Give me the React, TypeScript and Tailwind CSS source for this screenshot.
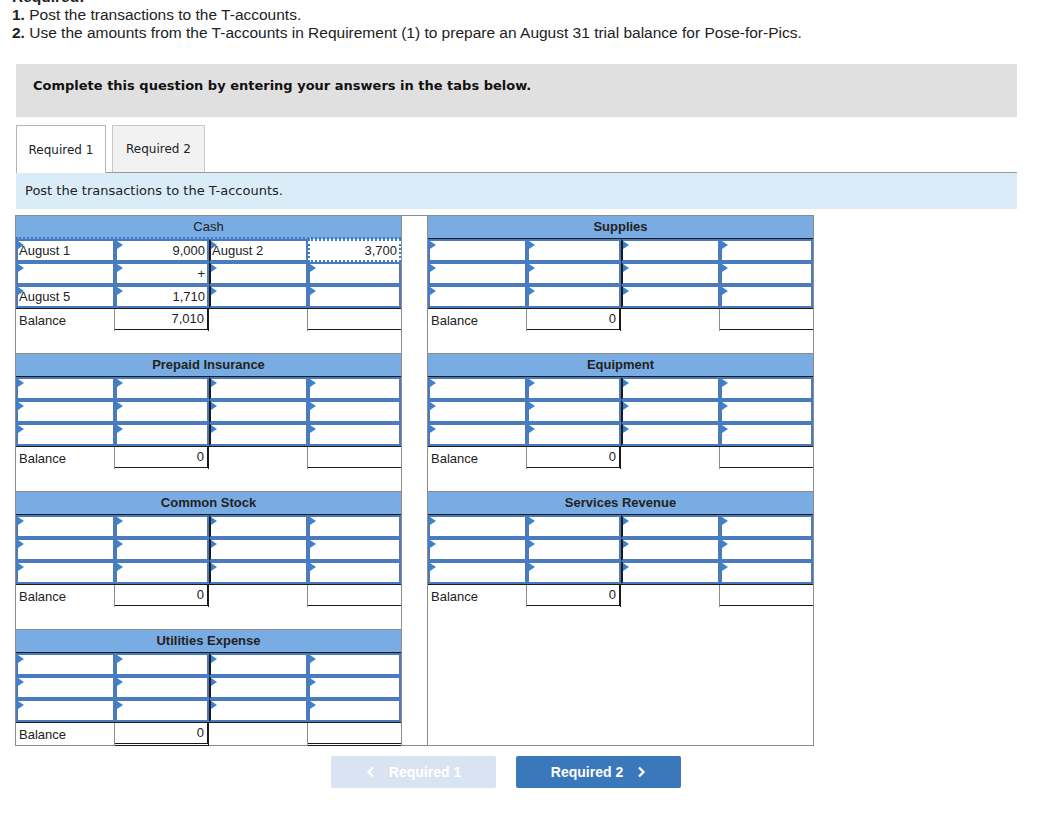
import React from "react";

type Row = { cells: string[]; dotted4?: boolean };
type Acct = { name: string; rows: Row[]; balance: string; bold?: boolean; dottedHeader?: boolean };

const emptyRows: Row[] = [{ cells: ["", "", "", ""] }, { cells: ["", "", "", ""] }, { cells: ["", "", "", ""] }];

const left: Acct[] = [
  {
    name: "Cash",
    bold: false,
    dottedHeader: true,
    rows: [
      { cells: ["August 1", "9,000", "August 2", "3,700"], dotted4: true },
      { cells: ["", "+", "", ""] },
      { cells: ["August 5", "1,710", "", ""] },
    ],
    balance: "7,010",
  },
  { name: "Prepaid Insurance", bold: true, rows: emptyRows, balance: "0" },
  { name: "Common Stock", bold: true, rows: emptyRows, balance: "0" },
  { name: "Utilities Expense", bold: true, rows: emptyRows, balance: "0" },
];

const right: Acct[] = [
  { name: "Supplies", bold: true, rows: emptyRows, balance: "0" },
  { name: "Equipment", bold: true, rows: emptyRows, balance: "0" },
  { name: "Services Revenue", bold: true, rows: emptyRows, balance: "0" },
];

const cellFont = { fontFamily: '"Liberation Sans", Arial, sans-serif' };

function Tri() {
  return (
    <span className="absolute left-0 top-0 w-0 h-0 border-y-[4px] border-y-transparent border-l-[6px] border-l-[#3b82d0]" />
  );
}

function InputCell({ text, align, tLine, dotted }: { text: string; align: "left" | "right"; tLine?: boolean; dotted?: boolean }) {
  if (dotted) {
    return (
      <div className="relative h-[23px] border-2 border-dotted border-[#3b7dc6] flex items-center justify-end pr-[2px] text-[13px] text-[#222]">
        {text}
      </div>
    );
  }
  return (
    <div
      className={
        "relative h-[23px] border-2 border-[#4a7bbf] flex items-center text-[13px] text-[#222] " +
        (align === "right" ? "justify-end pr-[2px] " : "pl-[1px] ") +
        (tLine ? "border-l-[#1a1a1a]" : "")
      }
    >
      <Tri />
      {text}
    </div>
  );
}

function Block({ a, spacer }: { a: Acct; spacer: boolean }) {
  return (
    <div className="flex flex-col" style={cellFont}>
      <div
        className={
          "h-[23px] bg-[#7aace4] flex items-center justify-center text-[13px] text-[#222] " +
          (a.bold ? "font-bold " : "font-normal ") +
          (a.dottedHeader ? "border-b-2 border-dotted border-[#3b7dc6]" : "border-b border-[#1a1a1a]")
        }
      >
        {a.name}
      </div>
      {a.rows.map((r, i) => (
        <div key={i} className="grid grid-cols-[99px_94px_99px_93px]">
          <InputCell text={r.cells[0]} align="left" />
          <InputCell text={r.cells[1]} align="right" />
          <InputCell text={r.cells[2]} align="left" tLine />
          <InputCell text={r.cells[3]} align="right" dotted={r.dotted4} />
        </div>
      ))}
      <div className="grid grid-cols-[99px_94px_99px_93px] h-[23px] border-t border-[#1a1a1a] text-[13px] text-[#222]">
        <div className="flex items-center pl-[3px] border-r border-[#8c8c8c]">Balance</div>
        <div className="flex items-center justify-end pr-[3px] border-r-2 border-b-[3px] border-double border-[#1a1a1a]">
          {a.balance}
        </div>
        <div className="border-r border-[#8c8c8c]"></div>
        <div className="border-b-[3px] border-double border-[#1a1a1a]"></div>
      </div>
      {spacer && <div className="h-[23px] border-b border-[#8c8c8c] bg-white"></div>}
    </div>
  );
}

export default function App() {
  return (
    <div className="w-[1044px] min-h-[834px] bg-white overflow-hidden">
      <div
        className="-mt-[12px] pl-[12px] text-[15.5px] leading-[18px] text-[#222]"
        style={{ fontFamily: '"Liberation Sans", Arial, sans-serif' }}
      >
        <div className="font-bold">Required:</div>
        <div>
          <span className="font-bold">1.</span> Post the transactions to the T-accounts.
        </div>
        <div>
          <span className="font-bold">2.</span> Use the amounts from the T-accounts in Requirement (1) to prepare an August 31 trial balance for Pose-for-Pics.
        </div>
      </div>

      <div className="ml-[16px] w-[1001px]" style={{ fontFamily: '"DejaVu Sans", Verdana, sans-serif' }}>
        <div className="mt-[22px] h-[53px] bg-[#e0e0e0] pt-[14px] pl-[17px] text-[13px] leading-[16px] font-bold text-[#111]">
          Complete this question by entering your answers in the tabs below.
        </div>
        <div className="mt-[8px] flex items-end gap-[6px] border-b border-[#999]">
          <div className="h-[48px] w-[90px] -mb-px bg-white border border-b-0 border-[#b5b5b5] flex items-center justify-center text-[12px] text-[#222]">
            Required 1
          </div>
          <div className="h-[47px] w-[93px] bg-[#f2f2f2] border border-b-0 border-[#c8c8c8] flex items-center justify-center text-[12px] text-[#222]">
            Required 2
          </div>
        </div>
        <div className="h-[36px] bg-[#dbecf9] flex items-center pl-[9px] text-[13px] text-[#222]">
          Post the transactions to the T-accounts.
        </div>
      </div>

      <div className="ml-[15px] mt-[6px] w-[799px] border border-[#8c8c8c] flex">
        <div className="w-[385px] flex flex-col">
          {left.map((a, i) => (
            <Block key={a.name} a={a} spacer={i < left.length - 1} />
          ))}
        </div>
        <div className="w-[27px] border-x border-[#8c8c8c] bg-white"></div>
        <div className="w-[385px] flex flex-col">
          {right.map((a, i) => (
            <Block key={a.name} a={a} spacer={i < right.length - 1} />
          ))}
          <div className="flex-1 bg-white"></div>
        </div>
      </div>

      <div className="mt-[10px] pl-[331px] flex gap-[20px]" style={{ fontFamily: '"Liberation Sans", Arial, sans-serif' }}>
        <div className="w-[165px] h-[32px] rounded-[2px] bg-[#d8e4f2] flex items-center justify-center gap-[14px] text-white text-[14px] font-bold">
          <svg width="9" height="12" viewBox="0 0 9 12" fill="none">
            <path d="M7 1.5 L2.5 6 L7 10.5" stroke="white" strokeWidth="2.2" />
          </svg>
          <span>Required 1</span>
        </div>
        <div className="w-[165px] h-[32px] rounded-[2px] bg-[#3a77bb] flex items-center justify-center gap-[14px] text-white text-[14px] font-bold">
          <span>Required 2</span>
          <svg width="9" height="12" viewBox="0 0 9 12" fill="none">
            <path d="M2 1.5 L6.5 6 L2 10.5" stroke="white" strokeWidth="2.2" />
          </svg>
        </div>
      </div>
    </div>
  );
}
